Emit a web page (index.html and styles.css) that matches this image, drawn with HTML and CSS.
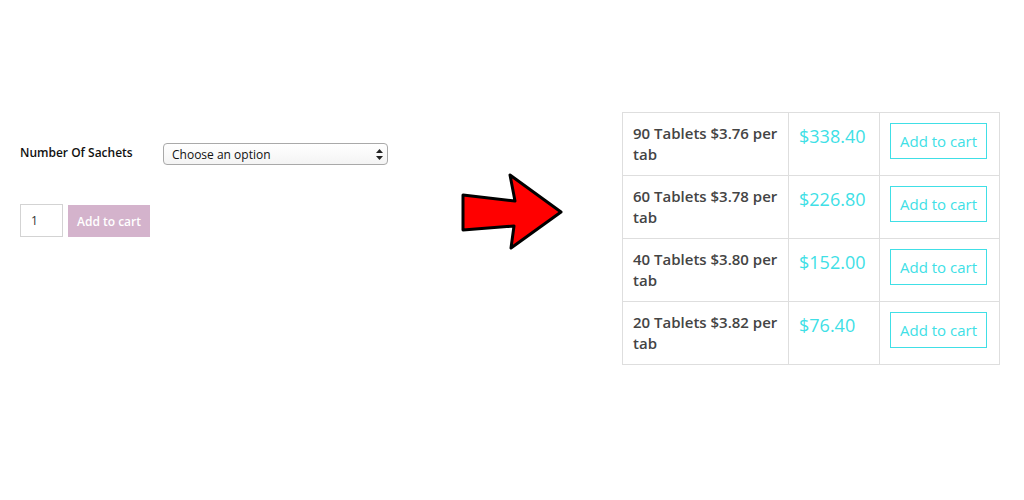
FILE: index.html
```html
<!DOCTYPE html>
<html lang="en">
<head>
  <meta charset="UTF-8">
  <title>Variation table</title>
  <link rel="stylesheet" href="styles.css">
</head>
<body>
  <div class="page">
    <div class="before">
      <div class="variation">
        <label for="sachets">Number Of Sachets</label>
        <div class="select-wrap">
          <select id="sachets">
            <option value="">Choose an option</option>
          </select>
          <svg class="select-arrows" width="7" height="11" viewBox="0 0 7 11">
            <path d="M3.5 0 L7 4 H0 Z M0 7 H7 L3.5 11 Z" fill="#222"/>
          </svg>
        </div>
      </div>
      <div class="cart-row">
        <input class="qty" type="text" value="1">
        <button class="add-btn">Add to cart</button>
      </div>
    </div>

    <div class="arrow">
      <svg width="104" height="80" viewBox="460 172 104 80">
        <polygon points="463,195 515,201 510,175 561,212 511,248 514,226 463,230"
                 fill="#ff0000" stroke="#000" stroke-width="3" stroke-linejoin="round"/>
      </svg>
    </div>

    <table class="prices">
      <tr>
        <td class="name">90 Tablets $3.76 per tab</td>
        <td class="price">$338.40</td>
        <td class="action"><button class="outline-btn">Add to cart</button></td>
      </tr>
      <tr>
        <td class="name">60 Tablets $3.78 per tab</td>
        <td class="price">$226.80</td>
        <td class="action"><button class="outline-btn">Add to cart</button></td>
      </tr>
      <tr>
        <td class="name">40 Tablets $3.80 per tab</td>
        <td class="price">$152.00</td>
        <td class="action"><button class="outline-btn">Add to cart</button></td>
      </tr>
      <tr>
        <td class="name">20 Tablets $3.82 per tab</td>
        <td class="price">$76.40</td>
        <td class="action"><button class="outline-btn">Add to cart</button></td>
      </tr>
    </table>
  </div>
</body>
</html>
```

FILE: styles.css
```css
* {
  box-sizing: border-box;
}

body {
  margin: 0;
  background: #fff;
  font-family: 'Open Sans', sans-serif;
  color: #333;
}

.page {
  display: flex;
  align-items: flex-start;
  padding: 112px 0 0 20px;
  height: 500px;
}

/* left: the standard dropdown form */
.before {
  width: 368px;
  padding-top: 31px;
}

.variation {
  display: flex;
  align-items: flex-start;
}

.variation label {
  width: 143px;
  padding-top: 1px;
  font-size: 12px;
  font-weight: 600;
  color: #111;
  line-height: 17px;
}

.select-wrap {
  position: relative;
  width: 225px;
}

.select-wrap select {
  appearance: none;
  -webkit-appearance: none;
  display: block;
  width: 100%;
  height: 22px;
  padding: 0 0 0 8px;
  border: 1px solid #a9a9a9;
  border-radius: 4px;
  background: linear-gradient(#fff, #f4f4f4);
  font-family: 'Open Sans', sans-serif;
  font-size: 12px;
  color: #111;
}

.select-arrows {
  position: absolute;
  right: 5px;
  top: 6px;
}

.cart-row {
  display: flex;
  align-items: flex-start;
  gap: 5px;
  margin-top: 39px;
}

.qty {
  width: 43px;
  height: 33px;
  padding: 0 0 0 10px;
  border: 1px solid #d3d3d3;
  font-family: 'Open Sans', sans-serif;
  font-size: 12px;
  color: #333;
}

.add-btn {
  width: 82px;
  height: 32px;
  margin-top: 1px;
  border: none;
  background: #d4b3cc;
  color: #fff;
  font-family: 'Open Sans', sans-serif;
  font-size: 12px;
  font-weight: 600;
}

/* middle: red arrow */
.arrow {
  width: 234px;
  padding: 60px 0 0 72px;
}

/* right: the variation price table */
.prices {
  border-collapse: collapse;
  width: 377px;
  table-layout: fixed;
}

.prices td {
  border: 1px solid #dedede;
  padding: 10px;
  vertical-align: top;
  height: 63px;
}

.prices .name {
  width: 166px;
  font-size: 15px;
  font-weight: 600;
  line-height: 21px;
  color: #444;
}

.prices .price {
  width: 91px;
  font-size: 18px;
  line-height: 26px;
  color: #40dfe6;
}

.prices .action {
  width: 120px;
}

.outline-btn {
  width: 97px;
  height: 36px;
  padding: 0;
  border: 1px solid #40dfe6;
  background: #fff;
  color: #40dfe6;
  font-family: 'Open Sans', sans-serif;
  font-size: 15px;
}
```
